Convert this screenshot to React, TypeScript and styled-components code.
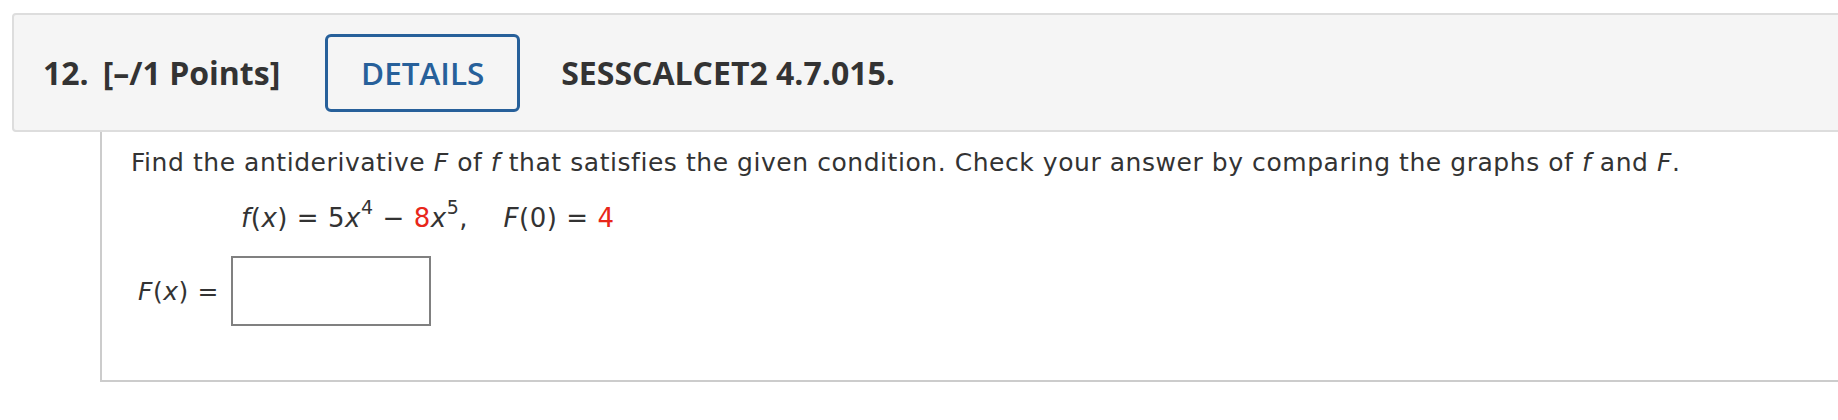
import styled, { createGlobalStyle } from "styled-components";

const Global = createGlobalStyle`
  html, body {
    margin: 0;
    padding: 0;
    background: #ffffff;
    overflow: hidden;
  }
`;

const Page = styled.div`
  width: 1900px;
  padding: 13px 0 0 12px;
`;

const Header = styled.div`
  display: flex;
  align-items: center;
  height: 115px;
  padding-left: 29px;
  background: #f5f5f5;
  border: 2px solid #dddddd;
  border-radius: 4px;
  font-family: "Open Sans", "Liberation Sans", sans-serif;
  font-weight: 700;
  font-size: 32px;
  color: #333333;
`;

const Num = styled.span`
  margin-right: 14px;
`;

const Points = styled.span`
  margin-right: 45px;
`;

const DetailsButton = styled.button`
  display: flex;
  align-items: center;
  justify-content: center;
  width: 195px;
  height: 78px;
  padding: 0;
  background: transparent;
  border: 3px solid #27609a;
  border-radius: 6px;
  font-family: "Open Sans", "Liberation Sans", sans-serif;
  font-weight: 600;
  font-size: 31.5px;
  color: #27609a;
  margin-right: 41px;
`;

const Code = styled.span``;

const Panel = styled.div`
  margin-left: 88px;
  height: 250px;
  border-left: 2px solid #cccccc;
  border-bottom: 2px solid #cccccc;
  padding: 16px 0 0 29px;
  box-sizing: border-box;
  font-family: "DejaVu Sans", Verdana, sans-serif;
  font-size: 25px;
  letter-spacing: 0.55px;
  color: #333333;
`;

const Question = styled.p`
  margin: 0;
  line-height: 30px;
`;

const Formula = styled.div`
  margin: 25px 0 0 110px;
  font-size: 26px;
  line-height: 30px;
  white-space: pre;
`;

const I = styled.i`
  font-style: italic;
`;

const Red = styled.span`
  color: #e8261a;
`;

const Sup = styled.sup`
  font-size: 19px;
  line-height: 0;
  vertical-align: 13px;
`;

const AnswerRow = styled.div`
  display: flex;
  align-items: center;
  gap: 12px;
  margin: 23px 0 0 7px;
`;

const AnswerBox = styled.input`
  width: 200px;
  height: 70px;
  box-sizing: border-box;
  border: 2px solid #808080;
  background: #ffffff;
  outline: none;
`;

export default function App() {
  return (
    <>
      <Global />
      <Page>
        <Header>
          <Num>12.</Num>
          <Points>[–/1 Points]</Points>
          <DetailsButton>DETAILS</DetailsButton>
          <Code>SESSCALCET2 4.7.015.</Code>
        </Header>
        <Panel>
          <Question>
            Find the antiderivative <I>F</I> of <I>f</I> that satisfies the given condition. Check your answer by
            comparing the graphs of <I>f</I> and <I>F</I>.
          </Question>
          <Formula>
            <I>f</I>(<I>x</I>) = 5<I>x</I>
            <Sup>4</Sup>{" "}−{" "}<Red>8</Red>
            <I>x</I>
            <Sup>5</Sup>,{"    "}<I>F</I>(0) = <Red>4</Red>
          </Formula>
          <AnswerRow>
            <span>
              <I>F</I>(<I>x</I>) =
            </span>
            <AnswerBox type="text" />
          </AnswerRow>
        </Panel>
      </Page>
    </>
  );
}
